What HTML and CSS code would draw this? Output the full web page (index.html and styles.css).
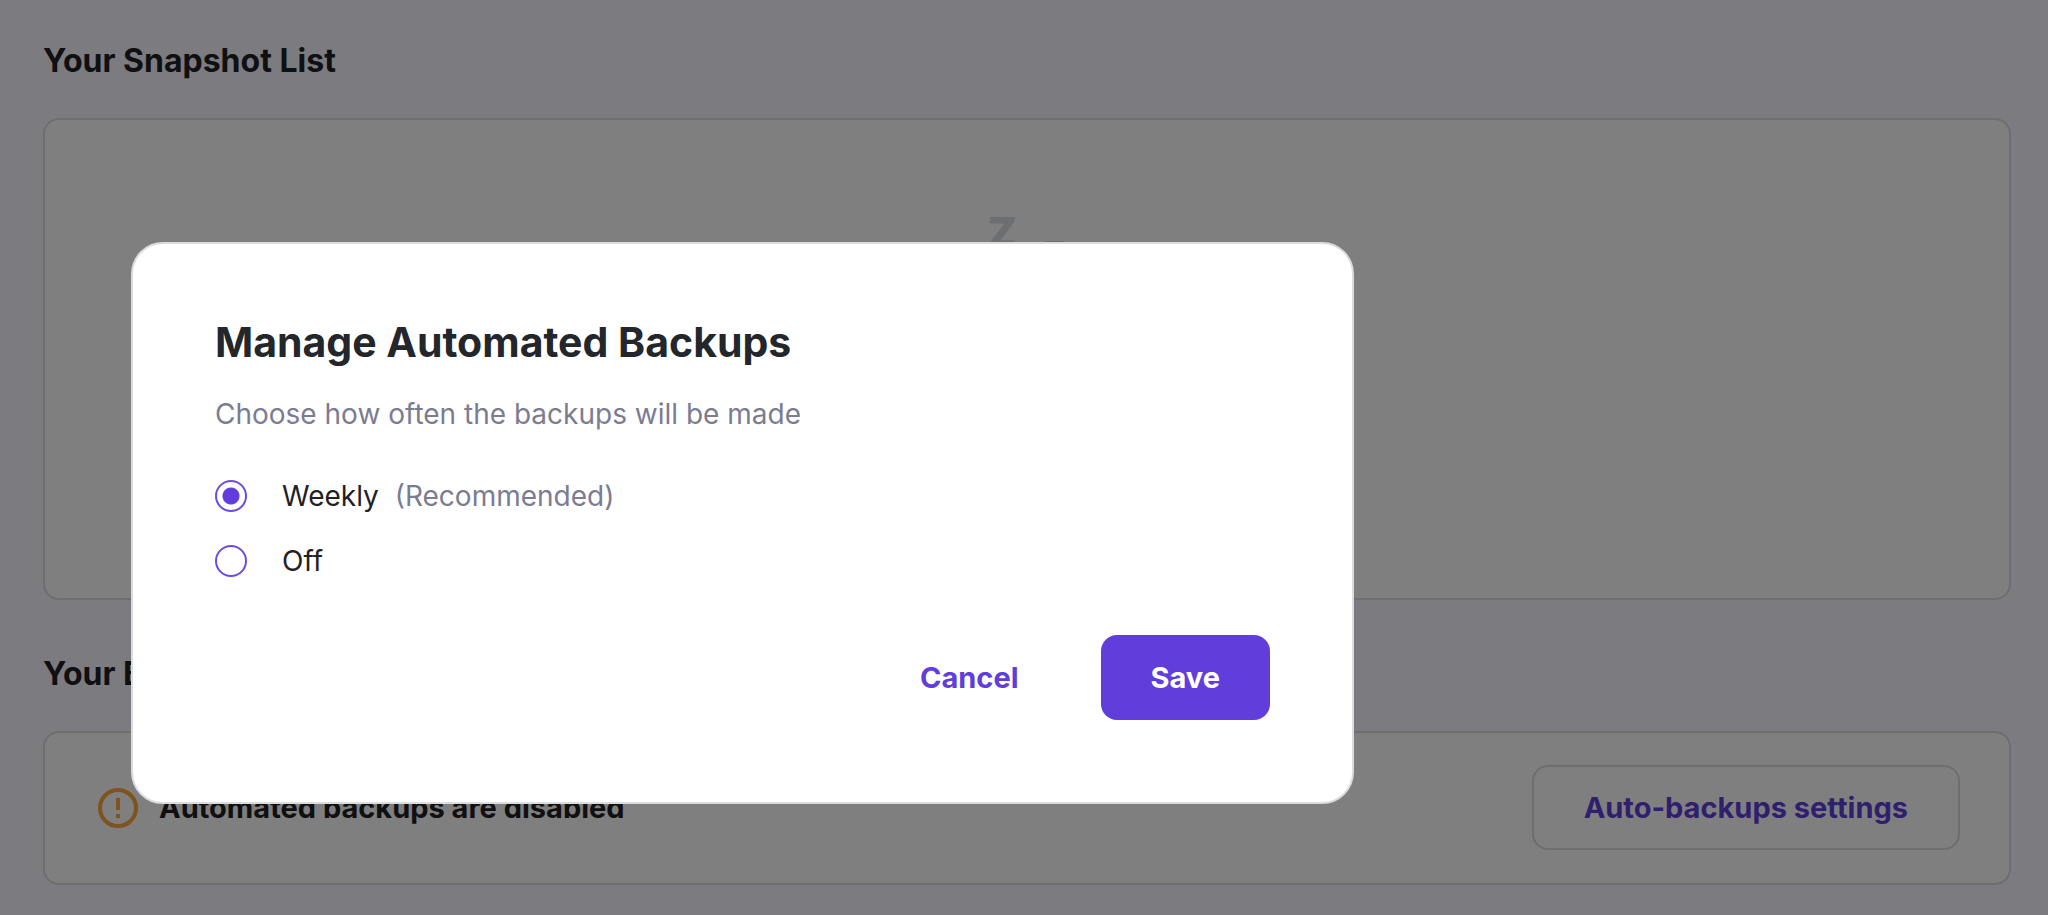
FILE: index.html
```html
<!DOCTYPE html>
<html lang="en">
<head>
    <meta charset="UTF-8">
    <title>Snapshots &amp; Backups</title>
    <link rel="stylesheet" href="styles.css">
</head>
<body>
<main class="page">
    <h2 class="section-title">Your Snapshot List</h2>
    <div class="card snapshot-card">
        <svg class="empty-icon" width="120" height="120" viewBox="0 0 120 120" aria-hidden="true">
            <text class="empty-z" x="21" y="30">Z</text>
            <rect x="77" y="24" width="20" height="6" rx="1"/>
        </svg>
    </div>

    <h2 class="section-title">Your Backups List</h2>
    <div class="card backup-card">
        <svg class="alert-icon" width="42" height="42" viewBox="0 0 42 42" aria-hidden="true">
            <circle cx="21" cy="21" r="18"/>
            <path d="M21 11v12M21 27v4"/>
        </svg>
        <p class="backup-text">Automated backups are disabled</p>
        <button type="button" class="btn btn-outline">Auto-backups settings</button>
    </div>
</main>

<div class="overlay">
    <form class="modal" role="dialog" aria-labelledby="modal-title">
        <h1 class="modal-title" id="modal-title">Manage Automated Backups</h1>
        <p class="modal-text">Choose how often the backups will be made</p>
        <div class="options">
            <div class="option">
                <input type="radio" name="frequency" id="weekly" checked>
                <label for="weekly">Weekly <span class="hint">(Recommended)</span></label>
            </div>
            <div class="option">
                <input type="radio" name="frequency" id="off">
                <label for="off">Off</label>
            </div>
        </div>
        <div class="actions">
            <button type="button" class="btn btn-text">Cancel</button>
            <button type="button" class="btn btn-primary">Save</button>
        </div>
    </form>
</div>
</body>
</html>
```

FILE: styles.css
```css
*{
    box-sizing: border-box;
    padding: 0;
    margin: 0;
}
body{
    min-height: 100vh;
    background: #f8f6ff;
    color: #1f2124;
    font-family: Inter, "Open Sans", sans-serif;
    font-size: 28px;
    line-height: 40px;
}
.page{
    padding: 40px 37px 0 43px;
}
.section-title{
    margin-bottom: 36px;
    font-size: 32px;
    font-weight: 700;
    line-height: 42px;
}
.card{
    display: flex;
    border: 2px solid #dadce0;
    border-radius: 16px;
    background: #fff;
}
.snapshot-card{
    justify-content: center;
    height: 482px;
    margin-bottom: 53px;
    padding-top: 97px;
}
.empty-icon{
    fill: #dadce0;
}
.empty-z{
    font-size: 41px;
    font-weight: 900;
}
.backup-card{
    align-items: center;
    padding: 32px 49px 33px 52px;
}
.alert-icon{
    margin-right: 20px;
    fill: none;
    stroke: #fea73e;
    stroke-width: 4;
}
.backup-text{
    flex: 1;
    font-size: 29px;
    font-weight: 700;
}
.btn{
    height: 85px;
    padding: 0 50px;
    border: 2px solid transparent;
    border-radius: 16px;
    background: none;
    color: #613edc;
    font-family: inherit;
    font-size: 29px;
    font-weight: 700;
    cursor: pointer;
}
.btn-outline{
    border-color: #dadce0;
}
.btn-primary{
    padding: 0 48px;
    background: #613edc;
    color: #fff;
}
.btn-text{
    padding: 0 30px;
}
.overlay{
    position: fixed;
    inset: 0;
    padding: 242px 131px;
    background: rgba(0, 0, 0, 0.5);
}
.modal{
    max-width: 1223px;
    padding: 72px 82px 82px;
    border: 2px solid #dadce0;
    border-radius: 32px;
    background: #fff;
}
.modal-title{
    margin-bottom: 26px;
    color: #23262b;
    font-size: 41px;
    font-weight: 700;
    line-height: 52px;
}
.modal-text{
    margin-bottom: 42px;
    color: #7b7c92;
}
.options{
    display: grid;
    gap: 25px;
    margin-bottom: 54px;
}
.option{
    display: flex;
    align-items: center;
    gap: 35px;
}
.option input{
    appearance: none;
    width: 32px;
    height: 32px;
    border: 2px solid #6c4ae6;
    border-radius: 50%;
}
.option input:checked{
    background: radial-gradient(circle, #613edc 8px, transparent 9px);
}
.hint{
    margin-left: 8px;
    color: #7b7c92;
}
.actions{
    display: flex;
    justify-content: flex-end;
    gap: 50px;
}
```
